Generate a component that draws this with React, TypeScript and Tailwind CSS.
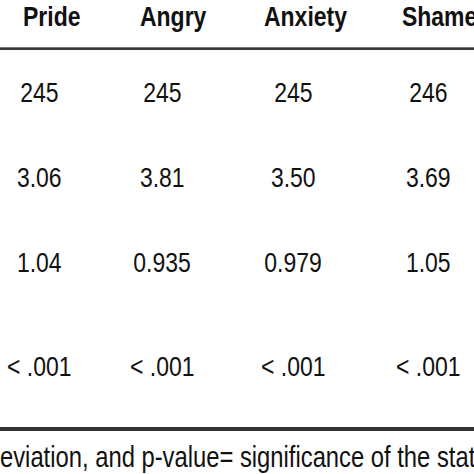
const font = "font-['Liberation_Sans_Narrow','Arial_Narrow','Liberation_Sans',sans-serif]";

// no narrow face is installed, so Liberation Sans is squeezed to Arial Narrow width
const narrow = "inline-block scale-x-[0.82]";

const headers = [
  { label: "Pride", pad: "pl-[23px]" },
  { label: "Angry", pad: "pl-[62px]" },
  { label: "Anxiety", pad: "pl-[18px]" },
  { label: "Shame", pad: "pl-[62px]" },
];

const rows = [
  { h: "h-[86px]", cells: ["245", "245", "245", "246"] },
  { h: "h-[84px]", cells: ["3.06", "3.81", "3.50", "3.69"] },
  { h: "h-[86px]", cells: ["1.04", "0.935", "0.979", "1.05"] },
  { h: "h-[121px]", cells: ["< .001", "< .001", "< .001", "< .001"] },
];

const cols = "grid grid-cols-[78px_168px_94px_176px]";

export default function App() {
  return (
    <div className={`w-[474px] h-[474px] overflow-hidden bg-white text-[#111] ${font}`}>
      <div className={`${cols} h-[47px] pt-[3px] text-[28px] leading-[28px] font-bold`}>
        {headers.map((h) => (
          <div key={h.label} className={`${h.pad} whitespace-nowrap`}>
            <span className={`${narrow} origin-left`}>{h.label}</span>
          </div>
        ))}
      </div>
      <div className="h-[3px] bg-[#3a3a3a] border-t border-[#777]" />
      {rows.map((r, i) => (
        <div key={i} className={`${cols} ${r.h} items-center text-[28px] leading-[28px]`}>
          {r.cells.map((c, j) => (
            <div key={j} className="text-center whitespace-nowrap">
              <span className={`${narrow} origin-center`}>{c}</span>
            </div>
          ))}
        </div>
      ))}
      <div className="h-[4px] bg-[#333]" />
      <div className="mt-[12px] text-[29px] leading-[29px] whitespace-nowrap">
        <span className={`${narrow} origin-left`}>
          eviation, and p-value= significance of the statistical test
        </span>
      </div>
    </div>
  );
}
